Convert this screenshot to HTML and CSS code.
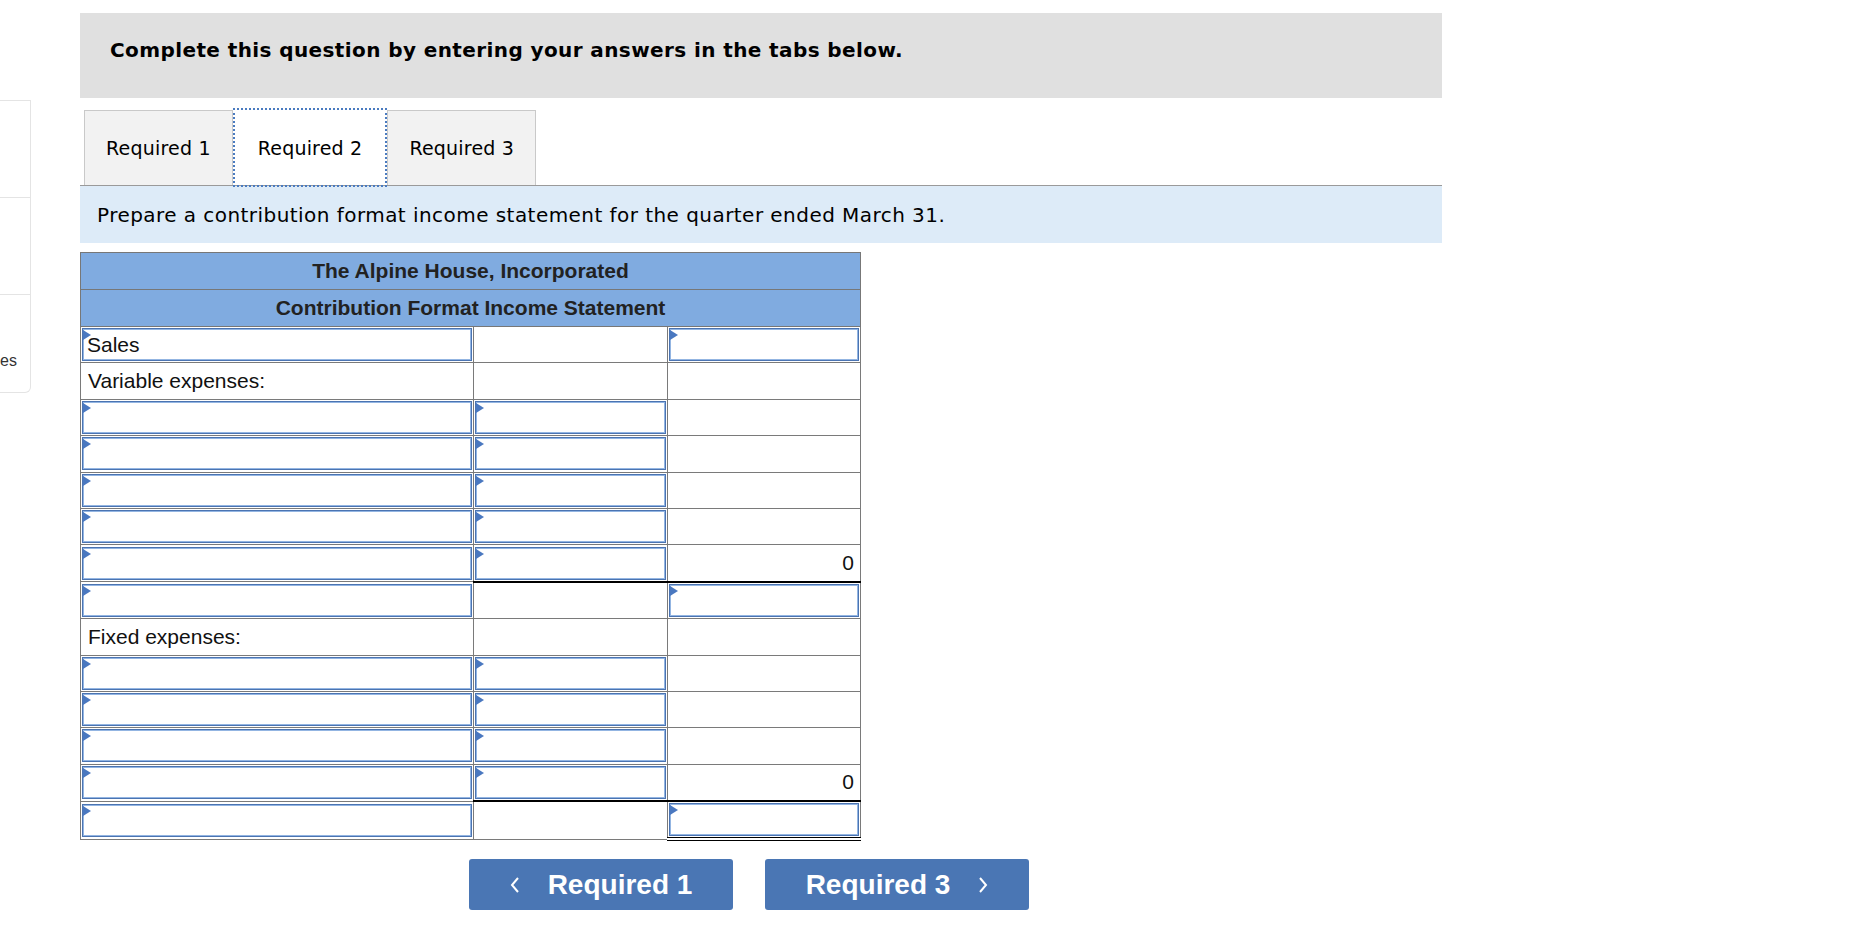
FILE: index.html
```html
<!DOCTYPE html>
<html lang="en">

<head>
  <meta charset="UTF-8">
  <title>Contribution Format Income Statement</title>
  <link rel="stylesheet" href="styles.css">
</head>

<body>
  <div class="page">
    <aside class="side">
      <div class="side-item"></div>
      <div class="side-item"></div>
      <div class="side-item last">es</div>
    </aside>

    <main class="main">
      <div class="prompt">Complete this question by entering your answers in the tabs below.</div>

      <div class="tabs">
        <div class="tab">Required 1</div>
        <div class="tab active">Required 2</div>
        <div class="tab">Required 3</div>
      </div>

      <div class="instr">Prepare a contribution format income statement for the quarter ended March 31.</div>

      <table class="sheet">
        <colgroup>
          <col class="c1">
          <col class="c2">
          <col class="c3">
        </colgroup>
        <thead>
          <tr><th colspan="3">The Alpine House, Incorporated</th></tr>
          <tr><th colspan="3">Contribution Format Income Statement</th></tr>
        </thead>
        <tbody>
          <tr>
            <td><div class="field">Sales</div></td>
            <td></td>
            <td><div class="field"></div></td>
          </tr>
          <tr>
            <td class="label">Variable expenses:</td>
            <td></td>
            <td></td>
          </tr>
          <tr><td><div class="field"></div></td><td><div class="field"></div></td><td></td></tr>
          <tr><td><div class="field"></div></td><td><div class="field"></div></td><td></td></tr>
          <tr><td><div class="field"></div></td><td><div class="field"></div></td><td></td></tr>
          <tr><td><div class="field"></div></td><td><div class="field"></div></td><td></td></tr>
          <tr><td><div class="field"></div></td><td><div class="field"></div></td><td class="num">0</td></tr>
          <tr>
            <td><div class="field"></div></td>
            <td class="sum"></td>
            <td class="sum"><div class="field"></div></td>
          </tr>
          <tr>
            <td class="label">Fixed expenses:</td>
            <td></td>
            <td></td>
          </tr>
          <tr><td><div class="field"></div></td><td><div class="field"></div></td><td></td></tr>
          <tr><td><div class="field"></div></td><td><div class="field"></div></td><td></td></tr>
          <tr><td><div class="field"></div></td><td><div class="field"></div></td><td></td></tr>
          <tr><td><div class="field"></div></td><td><div class="field"></div></td><td class="num">0</td></tr>
          <tr>
            <td><div class="field"></div></td>
            <td class="sum"></td>
            <td class="sum total"><div class="field"></div></td>
          </tr>
        </tbody>
      </table>

      <div class="nav">
        <button class="nav-btn">
          <svg width="10" height="16" viewBox="0 0 10 16"><path d="M8 1 L2 8 L8 15" fill="none" stroke="#fff" stroke-width="2"/></svg>
          <span>Required 1</span>
        </button>
        <button class="nav-btn">
          <span>Required 3</span>
          <svg width="10" height="16" viewBox="0 0 10 16"><path d="M2 1 L8 8 L2 15" fill="none" stroke="#fff" stroke-width="2"/></svg>
        </button>
      </div>
    </main>
  </div>
</body>

</html>
```

FILE: styles.css
```css
body {
  margin: 0;
  font-family: 'DejaVu Sans', Verdana, sans-serif;
  color: #000;
  background: #fff;
}

.page {
  display: flex;
  align-items: flex-start;
}

/* sidebar card, mostly scrolled off to the left */
.side {
  flex: none;
  width: 31px;
  margin-top: 100px;
  box-sizing: border-box;
  border: 1px solid #e4e4e4;
  border-left: none;
  border-radius: 0 0 6px 0;
}

.side-item {
  height: 97px;
  box-sizing: border-box;
  border-bottom: 1px solid #e4e4e4;
}

.side-item.last {
  border-bottom: none;
  padding: 57px 0 0 0;
  font-family: 'Liberation Sans', Arial, sans-serif;
  font-size: 16px;
  color: #333;
}

.main {
  flex: none;
  width: 1362px;
  margin-left: 49px;
  margin-top: 13px;
}

.prompt {
  height: 85px;
  box-sizing: border-box;
  padding: 25px 30px 0;
  background: #e0e0e0;
  font-size: 20px;
  font-weight: bold;
  letter-spacing: 0.4px;
  line-height: 24px;
}

.tabs {
  display: flex;
  margin-top: 12px;
  padding-left: 4px;
  border-bottom: 1px solid #9a9a9a;
}

.tab {
  height: 75px;
  box-sizing: border-box;
  display: flex;
  align-items: center;
  padding: 0 21px;
  background: #f2f2f2;
  border: 1px solid #c9c9c9;
  border-bottom: none;
  font-size: 19px;
  letter-spacing: 0.2px;
}

.tab.active {
  margin: 0 2px;
  padding: 0 23px;
  background: #fff;
  border: none;
  outline: 2px dotted #4a7bc0;
  position: relative;
}

.instr {
  height: 57px;
  box-sizing: border-box;
  display: flex;
  align-items: center;
  padding-left: 17px;
  background: #ddebf8;
  font-size: 20px;
  letter-spacing: 0.45px;
}

.sheet {
  margin-top: 9px;
  width: 780px;
  table-layout: fixed;
  border-collapse: collapse;
  font-family: 'Liberation Sans', Arial, sans-serif;
  font-size: 21px;
  color: #111;
}

.c1 { width: 393px; }
.c2 { width: 194px; }
.c3 { width: 193px; }

.sheet th {
  height: 36px;
  padding: 0;
  background: #80abe0;
  border: 1px solid #777;
  font-weight: bold;
  text-align: center;
  color: #222;
}

.sheet td {
  height: 33.4px;
  padding: 1px;
  border: 1px solid #7a7a7a;
  vertical-align: middle;
}

.sheet td.label {
  padding-left: 7px;
}

.sheet td.num {
  text-align: right;
  padding-right: 6px;
}

.sheet td.sum {
  border-top: 2px solid #000;
}

.sheet td.total {
  border-bottom: 4px double #000;
}

.field {
  position: relative;
  height: 33px;
  box-sizing: border-box;
  padding-left: 4px;
  border: 1px solid #4b74b2;
  box-shadow: inset 0 0 0 1px #93b5e2;
  background: #fff;
  display: flex;
  align-items: center;
}

.field::before {
  content: '';
  position: absolute;
  left: 0;
  top: 1px;
  border-left: 8px solid #4a78c0;
  border-top: 5px solid transparent;
  border-bottom: 5px solid transparent;
}

.nav {
  display: flex;
  gap: 32px;
  margin-top: 18px;
  padding-left: 389px;
}

.nav-btn {
  width: 264px;
  height: 51px;
  display: flex;
  align-items: center;
  justify-content: center;
  gap: 28px;
  padding: 0;
  border: none;
  border-radius: 3px;
  background: #4a76b4;
  color: #fff;
  font-family: 'Liberation Sans', Arial, sans-serif;
  font-size: 28px;
  font-weight: bold;
  cursor: pointer;
}
```
